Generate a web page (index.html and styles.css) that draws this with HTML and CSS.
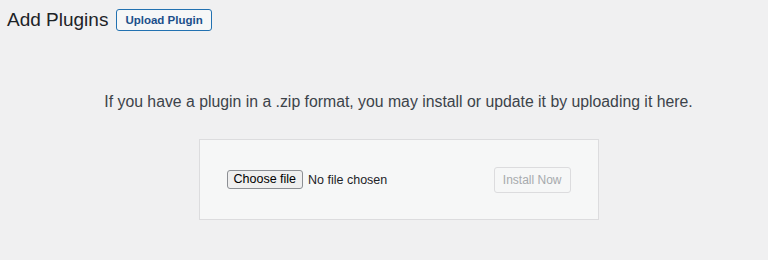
FILE: index.html
```html
<!DOCTYPE html>
<html lang="en">
<head>
    <meta charset="UTF-8">
    <meta name="viewport" content="width=device-width, initial-scale=1.0">
    <title>Add Plugins</title>
    <link rel="stylesheet" href="styles.css">
</head>
<body>
    <div class="wrap">
        <div class="page-head">
            <h1 class="page-title">Add Plugins</h1>
            <button class="title-action">Upload Plugin</button>
        </div>

        <div class="upload-plugin">
            <p class="install-help">If you have a plugin in a .zip format, you may install or update it by uploading it here.</p>
            <form class="upload-form">
                <label class="file-picker">
                    <input type="file" class="file-input" name="pluginzip">
                    <span class="file-button">Choose file</span>
                    <span class="file-name">No file chosen</span>
                </label>
                <button class="install-button" disabled>Install Now</button>
            </form>
        </div>
    </div>
</body>
</html>
```

FILE: styles.css
```css
body {
    margin: 0;
    padding: 0;
    background-color: #f0f0f1;
    font-family: "Liberation Sans", Arial, sans-serif;
    color: #3c434a;
}
.wrap {
    padding: 9px 7px 0;
}
.page-head {
    display: flex;
    align-items: center;
    gap: 8px;
}
.page-title {
    margin: 0;
    font-size: 19px;
    font-weight: 400;
    line-height: 22px;
    color: #1d2327;
}
.title-action {
    height: 22px;
    padding: 0 8px;
    border: 1px solid #2271b1;
    border-radius: 3px;
    background: #f6f7f7;
    color: #1b4f8a;
    font-family: inherit;
    font-size: 11.5px;
    font-weight: 700;
    cursor: pointer;
}
.upload-plugin {
    padding-left: 29px;
}
.install-help {
    margin: 61px 0 0;
    text-align: center;
    font-size: 15.8px;
    line-height: 20px;
    color: #3c434a;
}
.upload-form {
    box-sizing: border-box;
    width: 400px;
    height: 81px;
    margin: 27px auto 0;
    padding: 0 27px;
    border: 1px solid #dcdcde;
    background: #f6f7f7;
    display: flex;
    align-items: center;
    justify-content: space-between;
}
.file-picker {
    display: flex;
    align-items: center;
    gap: 5px;
    font-size: 12.5px;
    color: #1d2327;
}
.file-input {
    display: none;
}
.file-button {
    box-sizing: border-box;
    height: 19px;
    padding: 0 6px;
    border: 1px solid #8c8f94;
    border-radius: 3px;
    background: #efefef;
    line-height: 17px;
    color: #000;
}
.file-name {
    color: #1d2327;
}
.install-button {
    height: 26px;
    padding: 0 8px;
    border: 1px solid #dcdcde;
    border-radius: 3px;
    background: #f6f7f7;
    color: #a7aaad;
    font-family: inherit;
    font-size: 12px;
}
```
